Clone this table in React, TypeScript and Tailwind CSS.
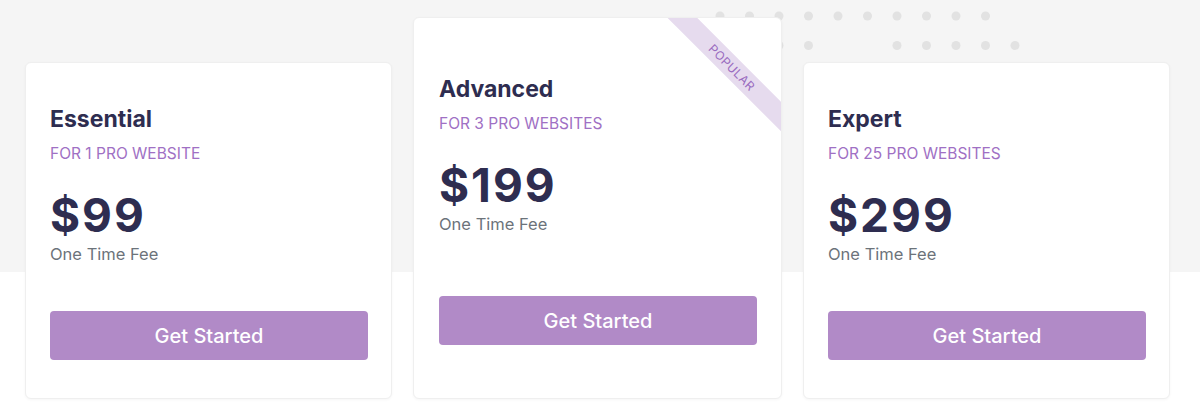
import React from "react";

const row1 = [720, 749.5, 779, 808.5, 838, 867.5, 897, 926.5, 956, 985.5];
const row2 = [720, 749.5, 779, 808.5, 897, 926.5, 956, 985.5, 1015];

function Dots() {
  return (
    <svg className="absolute left-0 top-0 pointer-events-none" width="1200" height="80" viewBox="0 0 1200 80">
      {row1.map((x) => (
        <circle key={"a" + x} cx={x} cy={16} r={4.5} fill="#e2e2e2" />
      ))}
      {row2.map((x) => (
        <circle key={"b" + x} cx={x} cy={45.5} r={4.5} fill="#e2e2e2" />
      ))}
    </svg>
  );
}

type Plan = { name: string; sub: string; price: string; popular?: boolean };

function Card({ plan }: { plan: Plan }) {
  const pop = !!plan.popular;
  return (
    <div
      className={
        "relative overflow-hidden rounded-[6px] bg-white border border-[#efefef] shadow-[0_1px_3px_rgba(0,0,0,0.04)] flex flex-col " +
        (pop ? "w-[369px] pt-[57px] pb-[53px] pl-[25px] pr-[24px]" : "w-[367px] pt-[42px] pb-[38px] pl-[24px] pr-[23px]")
      }
    >
      {pop && (
        <div className="absolute right-[-51px] top-[39px] w-[200px] h-[21px] rotate-45 bg-[#e6dbee] flex items-center justify-center">
          <span className="text-[12px] leading-none tracking-[0.5px] text-[#9a6cc0] font-['Inter',sans-serif]">POPULAR</span>
        </div>
      )}
      <div className="text-[23px] leading-[28px] font-bold text-[#2e2d50] font-['Inter',sans-serif]">{plan.name}</div>
      <div className="mt-[11px] text-[15.5px] leading-[20px] text-[#a070c4] font-['Inter',sans-serif]">{plan.sub}</div>
      <div className="mt-[27px] text-[46px] leading-[48px] font-bold tracking-[2px] text-[#2e2d50] font-['Inter',sans-serif]">{plan.price}</div>
      <div className="mt-[5px] text-[16.5px] leading-[20px] text-[#6c737a] font-['Inter',sans-serif]">One Time Fee</div>
      <button
        className={
          "h-[49px] w-full rounded-[4px] bg-[#b18ac7] text-white text-[20px] font-medium font-['Inter',sans-serif] " +
          (pop ? "mt-[62px]" : "mt-[47px]")
        }
      >
        Get Started
      </button>
    </div>
  );
}

export default function App() {
  const plans: Plan[] = [
    { name: "Essential", sub: "FOR 1 PRO WEBSITE", price: "$99" },
    { name: "Advanced", sub: "FOR 3 PRO WEBSITES", price: "$199", popular: true },
    { name: "Expert", sub: "FOR 25 PRO WEBSITES", price: "$299" },
  ];
  return (
    <div className="relative w-[1200px] h-[414px] overflow-hidden bg-[linear-gradient(to_bottom,#f5f5f5_272px,#ffffff_272px)] font-['Inter',sans-serif]">
      <Dots />
      <div className="relative flex items-end gap-[21px] pl-[25px] pt-[17px]">
        {plans.map((p) => (
          <Card key={p.name} plan={p} />
        ))}
      </div>
    </div>
  );
}
